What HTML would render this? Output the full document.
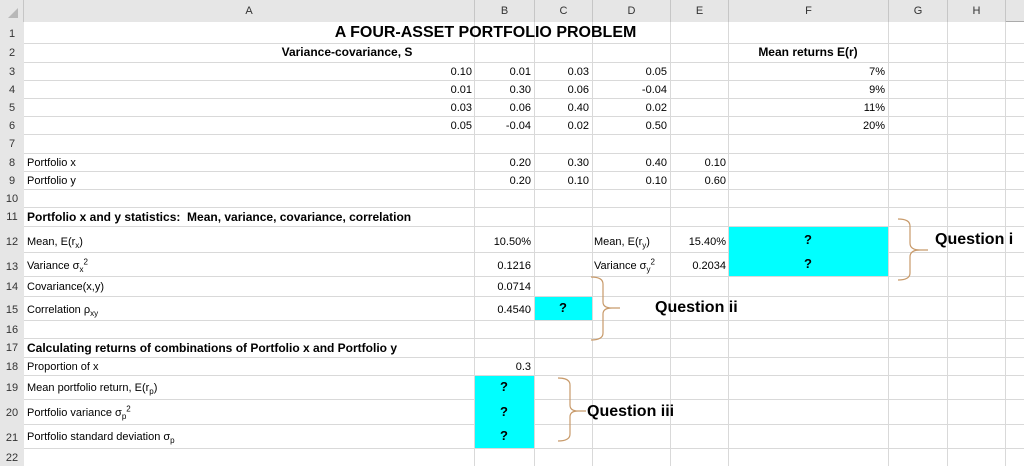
<!DOCTYPE html>
<html><head><meta charset="utf-8"><style>
body{margin:0;width:1024px;height:466px;overflow:hidden;background:#fff;font-family:"Liberation Sans",sans-serif;position:relative}
div{position:absolute;box-sizing:border-box}
.v{top:0;width:1px;height:466px;background:#d9d9d9}
.h{left:0;height:1px;width:1024px;background:#d9d9d9}
.t{font-size:11px;color:#000;white-space:nowrap;line-height:14px}
.r{text-align:right}
.rn{left:0;width:24px;text-align:center;font-size:11px;color:#333;background:#e6e6e6}
.ch{top:0;height:22px;line-height:22px;text-align:center;font-size:11px;color:#333;background:#e6e6e6;border-right:1px solid #c6c6c6}
.cy{background:#00ffff}
.q{font-weight:bold;font-size:13px;text-align:center}
.b{font-weight:bold}
sub,sup{font-size:8px;line-height:0}
</style></head><body>
<!-- cyan fills -->
<div class="cy" style="left:728px;top:226px;width:160px;height:50px"></div>
<div class="cy" style="left:534px;top:296px;width:58px;height:24px"></div>
<div class="cy" style="left:474px;top:375px;width:60px;height:73px"></div>
<!-- vertical grid -->
<div class="v" style="left:474px"></div><div class="v" style="left:534px"></div><div class="v" style="left:592px"></div><div class="v" style="left:670px"></div><div class="v" style="left:728px"></div><div class="v" style="left:888px"></div><div class="v" style="left:947px"></div><div class="v" style="left:1005px"></div>
<!-- horizontal grid -->
<div class="h" style="top:43px"></div><div class="h" style="top:62px"></div><div class="h" style="top:80px"></div><div class="h" style="top:98px"></div><div class="h" style="top:116px"></div><div class="h" style="top:134px"></div><div class="h" style="top:153px"></div><div class="h" style="top:171px"></div><div class="h" style="top:189px"></div><div class="h" style="top:207px"></div><div class="h" style="top:226px"></div><div class="h" style="top:252px"></div><div class="h" style="top:276px"></div><div class="h" style="top:296px"></div><div class="h" style="top:320px"></div><div class="h" style="top:338px"></div><div class="h" style="top:357px"></div><div class="h" style="top:375px"></div><div class="h" style="top:399px"></div><div class="h" style="top:424px"></div><div class="h" style="top:448px"></div>
<!-- cover cyan interior gridlines -->
<div style="left:729px;top:226px;width:159px;height:50px;background:#00ffff;top:227px;height:49px"></div>
<div style="left:475px;top:376px;width:59px;height:72px;background:#00ffff"></div>
<div style="left:535px;top:297px;width:57px;height:23px;background:#00ffff"></div>
<!-- headers -->
<div style="left:0;top:0;width:1024px;height:22px;background:#e6e6e6;border-bottom:1px solid #ababab"></div>
<div class="ch" style="left:0;width:24px"><svg width="24" height="22"><path d="M18 8 L18 18 L8 18Z" fill="#b8b8b8"/></svg></div>
<div class="ch" style="left:24px;width:451px">A</div>
<div class="ch" style="left:475px;width:60px">B</div>
<div class="ch" style="left:535px;width:58px">C</div>
<div class="ch" style="left:593px;width:78px">D</div>
<div class="ch" style="left:671px;width:58px">E</div>
<div class="ch" style="left:729px;width:160px">F</div>
<div class="ch" style="left:889px;width:59px">G</div>
<div class="ch" style="left:948px;width:58px">H</div>
<div style="left:0;top:22px;width:24px;height:444px;background:#e6e6e6;border-right:1px solid #ababab"></div>
<!-- row numbers -->
<div class="rn" style="top:22px;height:21px;line-height:24px">1</div>
<div class="rn" style="top:43px;height:19px;line-height:21px">2</div>
<div class="rn" style="top:62px;height:18px;line-height:20px">3</div>
<div class="rn" style="top:80px;height:18px;line-height:20px">4</div>
<div class="rn" style="top:98px;height:18px;line-height:20px">5</div>
<div class="rn" style="top:116px;height:18px;line-height:20px">6</div>
<div class="rn" style="top:134px;height:19px;line-height:21px">7</div>
<div class="rn" style="top:153px;height:18px;line-height:20px">8</div>
<div class="rn" style="top:171px;height:18px;line-height:20px">9</div>
<div class="rn" style="top:189px;height:18px;line-height:20px">10</div>
<div class="rn" style="top:207px;height:19px;line-height:21px">11</div>
<div class="rn" style="top:226px;height:26px;line-height:32px">12</div>
<div class="rn" style="top:252px;height:24px;line-height:30px">13</div>
<div class="rn" style="top:276px;height:20px;line-height:22px">14</div>
<div class="rn" style="top:296px;height:24px;line-height:28px">15</div>
<div class="rn" style="top:320px;height:18px;line-height:20px">16</div>
<div class="rn" style="top:338px;height:19px;line-height:21px">17</div>
<div class="rn" style="top:357px;height:18px;line-height:20px">18</div>
<div class="rn" style="top:375px;height:24px;line-height:26px">19</div>
<div class="rn" style="top:399px;height:25px;line-height:28px">20</div>
<div class="rn" style="top:424px;height:24px;line-height:28px">21</div>
<div class="rn" style="top:448px;height:18px;line-height:20px">22</div>
<!-- row 1-2 -->
<div class="t b" style="left:24px;width:923px;top:24px;font-size:16px;line-height:18px;text-align:center">A FOUR-ASSET PORTFOLIO PROBLEM</div>
<div class="t b" style="left:24px;width:646px;top:45px;font-size:12px;text-align:center">Variance-covariance, S</div>
<div class="t b" style="left:728px;width:160px;top:45px;font-size:12px;text-align:center">Mean returns E(r)</div>
<!-- rows 3-6 -->
<div class="t r" style="left:400px;width:72px;top:65px">0.10</div><div class="t r" style="left:474px;width:57px;top:65px">0.01</div><div class="t r" style="left:534px;width:55px;top:65px">0.03</div><div class="t r" style="left:592px;width:75px;top:65px">0.05</div><div class="t r" style="left:728px;width:157px;top:65px">7%</div>
<div class="t r" style="left:400px;width:72px;top:83px">0.01</div><div class="t r" style="left:474px;width:57px;top:83px">0.30</div><div class="t r" style="left:534px;width:55px;top:83px">0.06</div><div class="t r" style="left:592px;width:75px;top:83px">-0.04</div><div class="t r" style="left:728px;width:157px;top:83px">9%</div>
<div class="t r" style="left:400px;width:72px;top:101px">0.03</div><div class="t r" style="left:474px;width:57px;top:101px">0.06</div><div class="t r" style="left:534px;width:55px;top:101px">0.40</div><div class="t r" style="left:592px;width:75px;top:101px">0.02</div><div class="t r" style="left:728px;width:157px;top:101px">11%</div>
<div class="t r" style="left:400px;width:72px;top:119px">0.05</div><div class="t r" style="left:474px;width:57px;top:119px">-0.04</div><div class="t r" style="left:534px;width:55px;top:119px">0.02</div><div class="t r" style="left:592px;width:75px;top:119px">0.50</div><div class="t r" style="left:728px;width:157px;top:119px">20%</div>
<!-- rows 8-9 -->
<div class="t" style="left:27px;top:156px">Portfolio x</div><div class="t r" style="left:474px;width:57px;top:156px">0.20</div><div class="t r" style="left:534px;width:55px;top:156px">0.30</div><div class="t r" style="left:592px;width:75px;top:156px">0.40</div><div class="t r" style="left:670px;width:56px;top:156px">0.10</div>
<div class="t" style="left:27px;top:174px">Portfolio y</div><div class="t r" style="left:474px;width:57px;top:174px">0.20</div><div class="t r" style="left:534px;width:55px;top:174px">0.10</div><div class="t r" style="left:592px;width:75px;top:174px">0.10</div><div class="t r" style="left:670px;width:56px;top:174px">0.60</div>
<!-- row 11 -->
<div class="t b" style="left:27px;top:210px;font-size:12px">Portfolio x and y statistics:&nbsp; Mean, variance, covariance, correlation</div>
<!-- 12-15 -->
<div class="t" style="left:27px;top:235px">Mean, E(r<sub>x</sub>)</div><div class="t r" style="left:474px;width:57px;top:235px">10.50%</div>
<div class="t" style="left:594px;top:235px">Mean, E(r<sub>y</sub>)</div><div class="t r" style="left:670px;width:56px;top:235px">15.40%</div>
<div class="t q" style="left:728px;width:160px;top:233px">?</div>
<div class="t" style="left:27px;top:259px">Variance σ<sub>x</sub><sup>2</sup></div><div class="t r" style="left:474px;width:57px;top:259px">0.1216</div>
<div class="t" style="left:594px;top:259px">Variance σ<sub>y</sub><sup>2</sup></div><div class="t r" style="left:670px;width:56px;top:259px">0.2034</div>
<div class="t q" style="left:728px;width:160px;top:257px">?</div>
<div class="t" style="left:27px;top:280px">Covariance(x,y)</div><div class="t r" style="left:474px;width:57px;top:280px">0.0714</div>
<div class="t" style="left:27px;top:303px">Correlation ρ<sub>xy</sub></div><div class="t r" style="left:474px;width:57px;top:303px">0.4540</div>
<div class="t q" style="left:534px;width:58px;top:301px">?</div>
<!-- 17-21 -->
<div class="t b" style="left:27px;top:341px;font-size:12px">Calculating returns of combinations of Portfolio x and Portfolio y</div>
<div class="t" style="left:27px;top:360px">Proportion of x</div><div class="t r" style="left:474px;width:57px;top:360px">0.3</div>
<div class="t" style="left:27px;top:381px">Mean portfolio return, E(r<sub>p</sub>)</div><div class="t q" style="left:474px;width:60px;top:380px">?</div>
<div class="t" style="left:27px;top:406px">Portfolio variance σ<sub>p</sub><sup>2</sup></div><div class="t q" style="left:474px;width:60px;top:405px">?</div>
<div class="t" style="left:27px;top:430px">Portfolio standard deviation σ<sub>p</sub></div><div class="t q" style="left:474px;width:60px;top:429px">?</div>
<!-- brackets -->
<svg style="position:absolute;left:0;top:0" width="1024" height="466" fill="none" stroke="#c89a6a" stroke-width="1.2">
<path d="M898 219 Q910 219 910 226 L910 243 Q910 250 920 250 L928 250 M920 250 Q910 250 910 257 L910 273 Q910 280 898 280"/>
<path d="M591 277 Q603 277 603 284 L603 302 Q603 308 612 308 L620 308 M612 308 Q603 308 603 314 L603 333 Q603 340 591 340"/>
<path d="M558 378 Q570 378 570 385 L570 405 Q570 411 578 411 L586 411 M578 411 Q570 411 570 417 L570 434 Q570 441 558 441"/>
</svg>
<div class="t b" style="left:935px;top:231px;font-size:16px;line-height:18px">Question i</div>
<div class="t b" style="left:655px;top:299px;font-size:16px;line-height:18px">Question ii</div>
<div class="t b" style="left:587px;top:403px;font-size:16px;line-height:18px">Question iii</div>
</body></html>
